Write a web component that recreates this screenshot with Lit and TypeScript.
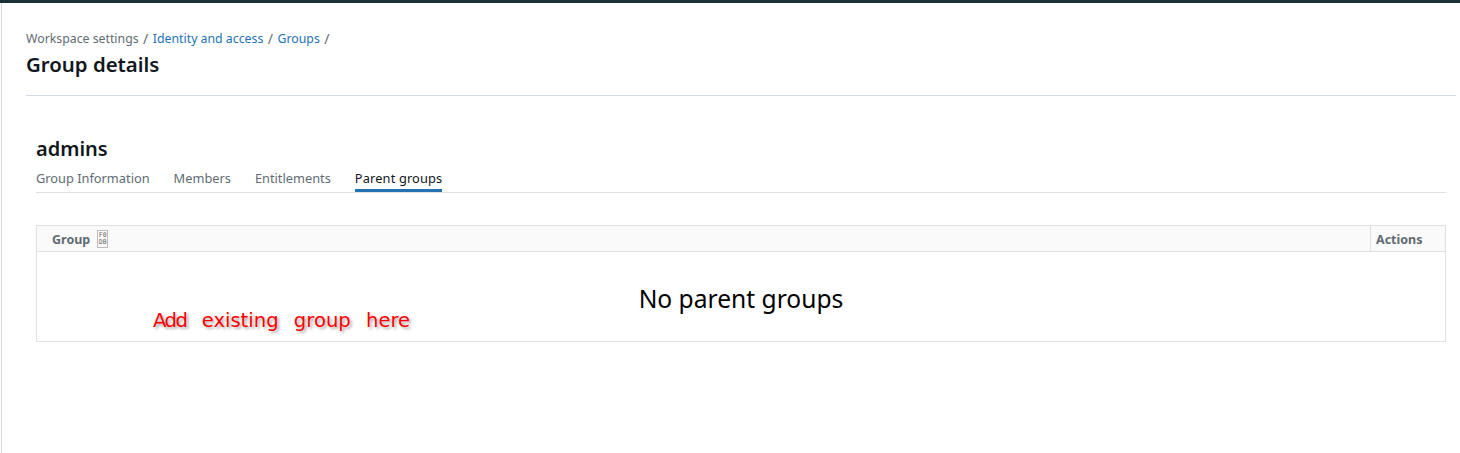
import { LitElement, html, css } from "lit";
import { customElement } from "lit/decorators.js";

@customElement("app-root")
export class AppRoot extends LitElement {
  static styles = css`
    :host {
      display: block;
      height: 453px;
      overflow: hidden;
      background: #fff;
      font-family: "Noto Sans", "Open Sans", sans-serif;
      --border: #e0e0e0;
      --muted: #5f6b73;
      --blue: #2272b4;
    }

    .topbar {
      height: 3px;
      background: #1b3139;
    }

    .page {
      position: relative;
      height: 450px;
      border-left: 1px solid #d8d8d8;
      margin-left: 1px;
      padding: 27px 4px 0 24px;
      box-sizing: border-box;
    }

    .crumbs {
      display: flex;
      font-size: 12.3px;
      line-height: 18px;
      color: var(--muted);
      white-space: pre;
    }

    .crumbs a {
      color: var(--blue);
      text-decoration: none;
    }

    .sep {
      font-size: 14px;
      margin: 0 4.5px;
      color: var(--muted);
    }

    .sep.last {
      margin-right: 0;
    }

    h1 {
      margin: 2px 0 0;
      font-size: 20.4px;
      line-height: 28px;
      font-weight: 600;
      color: #11171c;
    }

    .head-rule {
      height: 1px;
      margin-top: 17px;
      background: #d1d9e1;
    }

    .body {
      padding: 0 10px;
    }

    h2 {
      margin: 39px 0 0;
      font-size: 20px;
      line-height: 28px;
      font-weight: 600;
      color: #11171c;
    }

    .tabs {
      display: flex;
      gap: 24px;
      margin-top: 6px;
      border-bottom: 1px solid var(--border);
      height: 23px;
    }

    .tab {
      font-size: 12.8px;
      line-height: 18px;
      color: var(--muted);
      height: 23px;
    }

    .tab.active {
      color: #11171c;
      height: 20px;
      letter-spacing: 0.15px;
      border-bottom: 3px solid var(--blue);
    }

    .table {
      margin-top: 32px;
      border: 1px solid var(--border);
    }

    .thead {
      display: flex;
      height: 25px;
      background: #fafafa;
      border-bottom: 1px solid var(--border);
      font-size: 12.5px;
      font-weight: 700;
      color: var(--muted);
    }

    .col-group {
      flex: 1;
      display: flex;
      align-items: center;
      padding: 1px 0 0 15px;
      gap: 7px;
    }

    .col-actions {
      width: 75px;
      display: flex;
      align-items: center;
      padding: 1px 0 0 5px;
      box-sizing: border-box;
      border-left: 1px solid var(--border);
    }

    .tofu {
      width: 9px;
      height: 16px;
      border: 1px solid #bdbdbd;
      display: flex;
      flex-direction: column;
      align-items: center;
      justify-content: center;
      font-family: "DejaVu Sans Mono", monospace;
      font-size: 6.5px;
      line-height: 7px;
      font-weight: 400;
      color: #666;
    }

    .empty {
      height: 89px;
      display: flex;
      justify-content: center;
      padding-top: 31px;
      box-sizing: border-box;
      font-size: 24.6px;
      line-height: 32px;
      color: #000;
    }

    .note {
      position: absolute;
      left: 151px;
      top: 306px;
      font-family: "DejaVu Sans", sans-serif;
      font-size: 19.6px;
      line-height: 24px;
      color: #ff0000;
      word-spacing: 9px;
      text-shadow: 2px 2px 3px rgba(0, 0, 0, 0.35);
      white-space: nowrap;
    }

    .note .tight {
      letter-spacing: -1.5px;
    }
  `;

  render() {
    return html`
      <div class="topbar"></div>
      <div class="page">
        <div class="crumbs">
          <span>Workspace settings</span><span class="sep">/</span
          ><a>Identity and access</a><span class="sep">/</span><a>Groups</a
          ><span class="sep last">/</span>
        </div>
        <h1>Group details</h1>
        <div class="head-rule"></div>
        <div class="body">
          <h2>admins</h2>
          <div class="tabs">
            <div class="tab">Group Information</div>
            <div class="tab">Members</div>
            <div class="tab">Entitlements</div>
            <div class="tab active">Parent groups</div>
          </div>
          <div class="table">
            <div class="thead">
              <div class="col-group">
                Group
                <span class="tofu"><span>F0</span><span>DB</span></span>
              </div>
              <div class="col-actions">Actions</div>
            </div>
            <div class="empty">No parent groups</div>
          </div>
        </div>
        <div class="note"><span class="tight">Add</span> existing group here</div>
      </div>
    `;
  }
}
